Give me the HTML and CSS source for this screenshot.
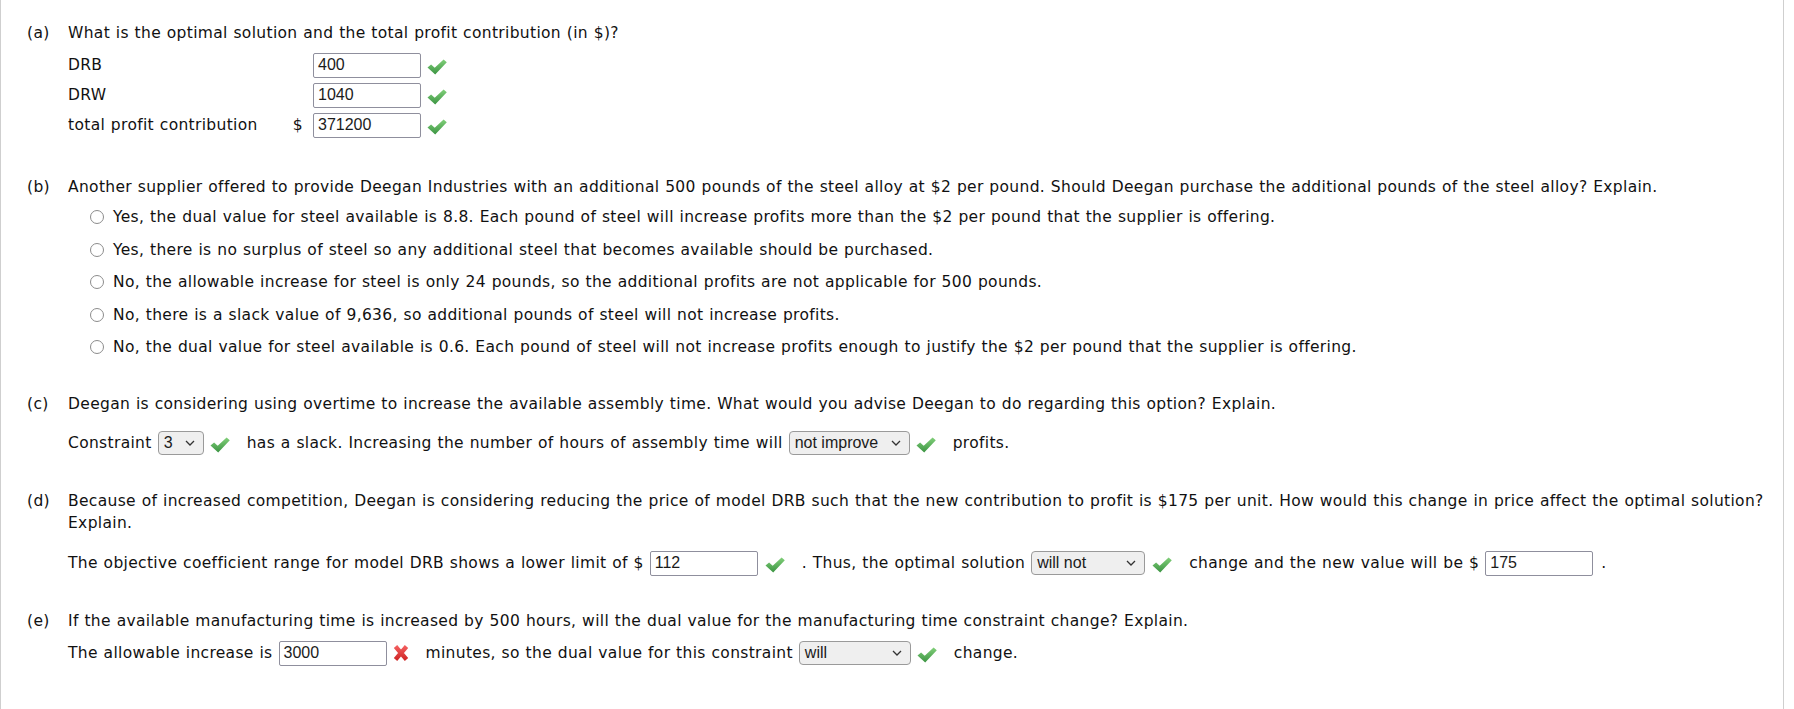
FILE: index.html
```html
<!DOCTYPE html>
<html lang="en">
<head>
<meta charset="utf-8">
<title>Deegan Industries</title>
<link rel="stylesheet" href="styles.css">
</head>
<body>
<svg width="0" height="0" class="defs" aria-hidden="true">
  <defs>
    <linearGradient id="gok" x1="0" y1="0" x2="0" y2="1">
      <stop offset="0" stop-color="#82d07a"/>
      <stop offset="1" stop-color="#3b9442"/>
    </linearGradient>
    <linearGradient id="gx" x1="0" y1="0" x2="0" y2="1">
      <stop offset="0" stop-color="#f25c5c"/>
      <stop offset="1" stop-color="#d02828"/>
    </linearGradient>
    <symbol id="ok" viewBox="0 0 20 16">
      <path d="M0.5 8.4 L4.1 5.4 L7.7 8.7 L16.6 0.4 L19.8 3.2 L8.2 15.5 Z" fill="url(#gok)"/>
    </symbol>
    <symbol id="bad" viewBox="0 0 16 18">
      <path d="M2.5 2.5 L13.5 15.5 M13.5 2.5 L2.5 15.5" stroke="url(#gx)" stroke-width="4.4" fill="none"/>
    </symbol>
    <symbol id="chev" viewBox="0 0 10 6">
      <path d="M1 1 L5 5 L9 1" stroke="#333" stroke-width="1.3" fill="none"/>
    </symbol>
  </defs>
</svg>
<div class="page">

  <section class="part part-a">
    <div class="lbl">(a)</div>
    <div class="body">
      <div class="q">What is the optimal solution and the total profit contribution (in $)?</div>
      <div class="ans-grid">
        <div class="ans-row">
          <span class="ans-name">DRB</span><span class="cur"></span>
          <span class="field">400</span>
          <svg class="ok"><use href="#ok"/></svg>
        </div>
        <div class="ans-row">
          <span class="ans-name">DRW</span><span class="cur"></span>
          <span class="field">1040</span>
          <svg class="ok"><use href="#ok"/></svg>
        </div>
        <div class="ans-row">
          <span class="ans-name">total profit contribution</span><span class="cur">$</span>
          <span class="field">371200</span>
          <svg class="ok"><use href="#ok"/></svg>
        </div>
      </div>
    </div>
  </section>

  <section class="part part-b">
    <div class="lbl">(b)</div>
    <div class="body">
      <div class="q">Another supplier offered to provide Deegan Industries with an additional 500 pounds of the steel alloy at $2 per pound. Should Deegan purchase the additional pounds of the steel alloy? Explain.</div>
      <ul class="opts">
        <li class="opt"><span class="radio"></span><span>Yes, the dual value for steel available is 8.8. Each pound of steel will increase profits more than the $2 per pound that the supplier is offering.</span></li>
        <li class="opt"><span class="radio"></span><span>Yes, there is no surplus of steel so any additional steel that becomes available should be purchased.</span></li>
        <li class="opt"><span class="radio"></span><span>No, the allowable increase for steel is only 24 pounds, so the additional profits are not applicable for 500 pounds.</span></li>
        <li class="opt"><span class="radio"></span><span>No, there is a slack value of 9,636, so additional pounds of steel will not increase profits.</span></li>
        <li class="opt"><span class="radio"></span><span>No, the dual value for steel available is 0.6. Each pound of steel will not increase profits enough to justify the $2 per pound that the supplier is offering.</span></li>
      </ul>
    </div>
  </section>

  <section class="part part-c">
    <div class="lbl">(c)</div>
    <div class="body">
      <div class="q">Deegan is considering using overtime to increase the available assembly time. What would you advise Deegan to do regarding this option? Explain.</div>
      <div class="row">
        <span>Constraint</span>
        <span class="sel sel-3"><span>3</span><svg class="chev"><use href="#chev"/></svg></span>
        <svg class="ok"><use href="#ok"/></svg>
        <span class="after">has a slack. Increasing the number of hours of assembly time will</span>
        <span class="sel sel-ni"><span>not improve</span><svg class="chev"><use href="#chev"/></svg></span>
        <svg class="ok"><use href="#ok"/></svg>
        <span class="after">profits.</span>
      </div>
    </div>
  </section>

  <section class="part part-d">
    <div class="lbl">(d)</div>
    <div class="body">
      <div class="q">Because of increased competition, Deegan is considering reducing the price of model DRB such that the new contribution to profit is $175 per unit. How would this change in price affect the optimal solution? Explain.</div>
      <div class="row">
        <span>The objective coefficient range for model DRB shows a lower limit of $</span>
        <span class="field">112</span>
        <svg class="ok ok-wide"><use href="#ok"/></svg>
        <span class="after">. Thus, the optimal solution</span>
        <span class="sel sel-w"><span>will not</span><svg class="chev"><use href="#chev"/></svg></span>
        <svg class="ok ok-wide"><use href="#ok"/></svg>
        <span class="after">change and the new value will be $</span>
        <span class="field">175</span>
        <span class="dot">.</span>
      </div>
    </div>
  </section>

  <section class="part part-e">
    <div class="lbl">(e)</div>
    <div class="body">
      <div class="q">If the available manufacturing time is increased by 500 hours, will the dual value for the manufacturing time constraint change? Explain.</div>
      <div class="row">
        <span>The allowable increase is</span>
        <span class="field">3000</span>
        <svg class="bad"><use href="#bad"/></svg>
        <span class="after">minutes, so the dual value for this constraint</span>
        <span class="sel sel-w2"><span>will</span><svg class="chev"><use href="#chev"/></svg></span>
        <svg class="ok"><use href="#ok"/></svg>
        <span class="after">change.</span>
      </div>
    </div>
  </section>

</div>
</body>
</html>
```

FILE: styles.css
```css
html, body {
  margin: 0;
  padding: 0;
  background: #fff;
}

body {
  font-family: "DejaVu Sans", Verdana, sans-serif;
  font-size: 15.5px;
  letter-spacing: 0.33px;
  word-spacing: 0.5px;
  color: #111;
}

.defs {
  position: absolute;
  width: 0;
  height: 0;
}

.page {
  box-sizing: border-box;
  width: 1784px;
  min-height: 709px;
  border-left: 1px solid #cfcfcf;
  border-right: 1px solid #cfcfcf;
  padding: 22px 14px 0 26px;
}

.part {
  display: grid;
  grid-template-columns: 41px 1fr;
}

.lbl,
.q {
  line-height: 22px;
}

.part-b { margin-top: 36px; }
.part-c { margin-top: 29.75px; }
.part-d { margin-top: 32px; }
.part-e { margin-top: 32px; }

/* (a) */
.ans-grid {
  margin-top: 6px;
}

.ans-row {
  display: grid;
  grid-template-columns: 220px 25px 108px auto;
  align-items: center;
  height: 30px;
}

.cur {
  text-align: right;
  padding-right: 10px;
}

.field {
  box-sizing: border-box;
  display: inline-flex;
  align-items: center;
  width: 108px;
  height: 25px;
  padding: 0 4px;
  border: 1px solid #8f8f9d;
  border-radius: 2px;
  background: #fff;
  font-family: "Liberation Sans", Arial, sans-serif;
  font-size: 16px;
  letter-spacing: 0;
  word-spacing: 0;
  color: #1b1b1b;
}

.ok {
  width: 20px;
  height: 16px;
  margin-left: 6px;
  flex: none;
}

.ans-row .ok {
  margin-top: 4px;
}

.bad {
  width: 16px;
  height: 18px;
  margin-left: 6px;
  flex: none;
}

/* (b) */
.opts {
  list-style: none;
  margin: 2.75px 0 0 22px;
  padding: 0;
}

.opt {
  display: flex;
  align-items: center;
  height: 32.5px;
}

.radio {
  box-sizing: border-box;
  width: 14px;
  height: 14px;
  border: 1.7px solid #8c8c8c;
  border-radius: 50%;
  background: #fff;
  margin-right: 9px;
  flex: none;
}

/* rows with inline controls */
.row {
  display: flex;
  align-items: center;
  height: 30px;
  white-space: nowrap;
}

.part-c .row {
  margin-top: 13px;
}

.part-d .row {
  margin-top: 14px;
}

.part-e .row {
  margin-top: 6px;
}

.row .field,
.row .sel {
  margin-left: 6px;
}

.row .ok {
  margin-top: 3px;
}

.row .ok-wide {
  margin-left: 7px;
}

.after {
  margin-left: 17px;
}

.dot {
  margin-left: 8px;
}

.sel {
  box-sizing: border-box;
  display: inline-flex;
  align-items: center;
  justify-content: space-between;
  height: 24px;
  padding: 0 8px 0 5px;
  border: 1px solid #9a9a9a;
  border-radius: 4px;
  background: #efefef;
  font-family: "Liberation Sans", Arial, sans-serif;
  font-size: 16px;
  letter-spacing: 0;
  word-spacing: 0;
  color: #1b1b1b;
  flex: none;
}

.chev {
  width: 10px;
  height: 6px;
  margin-left: 8px;
}

.sel-3 { width: 46px; }
.sel-ni { width: 121px; }
.sel-w { width: 114px; }
.sel-w2 { width: 112px; }
```
